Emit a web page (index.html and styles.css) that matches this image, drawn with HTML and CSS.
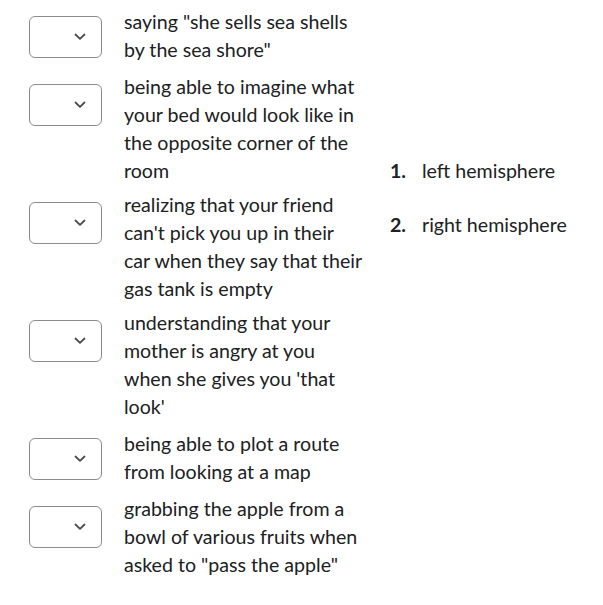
FILE: index.html
```html
<!DOCTYPE html>
<html lang="en">
<head>
<meta charset="utf-8">
<title>Matching</title>
<link rel="stylesheet" href="styles.css">
</head>
<body>
<div class="question">
  <div class="pairs">
    <div class="pair">
      <div class="select-cell"><div class="select"><svg class="chev" width="12" height="8" viewBox="0 0 12 8"><polyline points="1.5,1.5 6,5.8 10.5,1.5" fill="none" stroke="#494c4e" stroke-width="1.8" stroke-linecap="round" stroke-linejoin="round"/></svg></div></div>
      <div class="item">saying "she sells sea shells by the sea shore"</div>
    </div>
    <div class="pair">
      <div class="select-cell"><div class="select"><svg class="chev" width="12" height="8" viewBox="0 0 12 8"><polyline points="1.5,1.5 6,5.8 10.5,1.5" fill="none" stroke="#494c4e" stroke-width="1.8" stroke-linecap="round" stroke-linejoin="round"/></svg></div></div>
      <div class="item">being able to imagine what your bed would look like in the opposite corner of the room</div>
    </div>
    <div class="pair">
      <div class="select-cell"><div class="select"><svg class="chev" width="12" height="8" viewBox="0 0 12 8"><polyline points="1.5,1.5 6,5.8 10.5,1.5" fill="none" stroke="#494c4e" stroke-width="1.8" stroke-linecap="round" stroke-linejoin="round"/></svg></div></div>
      <div class="item">realizing that your friend can't pick you up in their car when they say that their gas tank is empty</div>
    </div>
    <div class="pair">
      <div class="select-cell"><div class="select"><svg class="chev" width="12" height="8" viewBox="0 0 12 8"><polyline points="1.5,1.5 6,5.8 10.5,1.5" fill="none" stroke="#494c4e" stroke-width="1.8" stroke-linecap="round" stroke-linejoin="round"/></svg></div></div>
      <div class="item">understanding that your mother is angry at you when she gives you 'that look'</div>
    </div>
    <div class="pair">
      <div class="select-cell"><div class="select"><svg class="chev" width="12" height="8" viewBox="0 0 12 8"><polyline points="1.5,1.5 6,5.8 10.5,1.5" fill="none" stroke="#494c4e" stroke-width="1.8" stroke-linecap="round" stroke-linejoin="round"/></svg></div></div>
      <div class="item">being able to plot a route from looking at a map</div>
    </div>
    <div class="pair">
      <div class="select-cell"><div class="select"><svg class="chev" width="12" height="8" viewBox="0 0 12 8"><polyline points="1.5,1.5 6,5.8 10.5,1.5" fill="none" stroke="#494c4e" stroke-width="1.8" stroke-linecap="round" stroke-linejoin="round"/></svg></div></div>
      <div class="item">grabbing the apple from a bowl of various fruits when asked to "pass the apple"</div>
    </div>
  </div>
  <ol class="choices">
    <li class="choice"><span class="num">1.</span><span class="label">left hemisphere</span></li>
    <li class="choice"><span class="num">2.</span><span class="label">right hemisphere</span></li>
  </ol>
</div>
</body>
</html>
```

FILE: styles.css
```css
html, body {
  margin: 0;
  padding: 0;
  background: #ffffff;
}

body {
  font-family: Lato, "Noto Sans", sans-serif;
  font-size: 19.6px;
  line-height: 28px;
  color: #202122;
}

.question {
  display: flex;
  align-items: flex-start;
  padding: 5px 0 0 29px;
}

.pairs {
  display: flex;
  flex-direction: column;
  gap: 6px;
}

.pair {
  display: flex;
  align-items: flex-start;
  gap: 22px;
}

.select-cell {
  padding: 11px 0 9px;
}

.select {
  box-sizing: border-box;
  width: 73px;
  height: 42px;
  border: 1px solid #8c8c8c;
  border-radius: 6px;
  background: #ffffff;
  display: flex;
  align-items: center;
  justify-content: flex-end;
  padding-right: 15px;
}

.chev {
  display: block;
}

.item {
  width: 240px;
  align-self: center;
}

.choices {
  list-style: none;
  margin: 0;
  padding: 152px 0 0 26px;
  display: flex;
  flex-direction: column;
  gap: 26px;
}

.choice {
  display: flex;
}

.num {
  width: 32px;
  font-weight: 700;
}
```
